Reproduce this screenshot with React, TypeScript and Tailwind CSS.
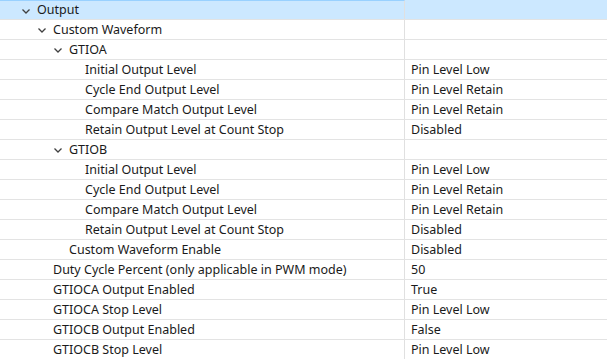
type Row = {
  label: string;
  value?: string;
  indent: number; // px left of label
  expander?: boolean;
  selected?: boolean;
};

const rows: Row[] = [
  { label: "Output", indent: 37, expander: true, selected: true },
  { label: "Custom Waveform", indent: 53, expander: true },
  { label: "GTIOA", indent: 69, expander: true },
  { label: "Initial Output Level", value: "Pin Level Low", indent: 85 },
  { label: "Cycle End Output Level", value: "Pin Level Retain", indent: 85 },
  { label: "Compare Match Output Level", value: "Pin Level Retain", indent: 85 },
  { label: "Retain Output Level at Count Stop", value: "Disabled", indent: 85 },
  { label: "GTIOB", indent: 69, expander: true },
  { label: "Initial Output Level", value: "Pin Level Low", indent: 85 },
  { label: "Cycle End Output Level", value: "Pin Level Retain", indent: 85 },
  { label: "Compare Match Output Level", value: "Pin Level Retain", indent: 85 },
  { label: "Retain Output Level at Count Stop", value: "Disabled", indent: 85 },
  { label: "Custom Waveform Enable", value: "Disabled", indent: 69 },
  { label: "Duty Cycle Percent (only applicable in PWM mode)", value: "50", indent: 53 },
  { label: "GTIOCA Output Enabled", value: "True", indent: 53 },
  { label: "GTIOCA Stop Level", value: "Pin Level Low", indent: 53 },
  { label: "GTIOCB Output Enabled", value: "False", indent: 53 },
  { label: "GTIOCB Stop Level", value: "Pin Level Low", indent: 53 },
];

function Chevron() {
  return (
    <svg width="8" height="5" viewBox="0 0 8 5" className="shrink-0">
      <path d="M0.5 0.5 L4 4 L7.5 0.5" fill="none" stroke="#404040" strokeWidth="1.3" />
    </svg>
  );
}

export default function App() {
  return (
    <div
      className="w-[607px] h-[359px] overflow-hidden bg-white text-[12.5px] text-[#1a1a1a]"
      style={{ fontFamily: '"Noto Sans", "Open Sans", sans-serif' }}
    >
      {rows.map((r, i) => (
        <div
          key={i}
          className={
            "flex h-[20px] border-b border-[#e3e3e3] " + (r.selected ? "bg-[#cce8ff]" : "bg-white")
          }
        >
          <div
            className={
              "relative w-[405px] shrink-0 flex items-center border-r border-[#e0e0e0] " +
              (r.selected ? "border-t border-t-[#99d1ff]" : "")
            }
          >
            {r.expander && (
              <div className="absolute top-[8px]" style={{ left: r.indent - 15 }}>
                <Chevron />
              </div>
            )}
            <span className="whitespace-nowrap leading-none pt-[1px]" style={{ paddingLeft: r.indent }}>
              {r.label}
            </span>
          </div>
          <div className="flex items-center pl-[6px] pt-[1px] whitespace-nowrap leading-none">{r.value}</div>
        </div>
      ))}
    </div>
  );
}
